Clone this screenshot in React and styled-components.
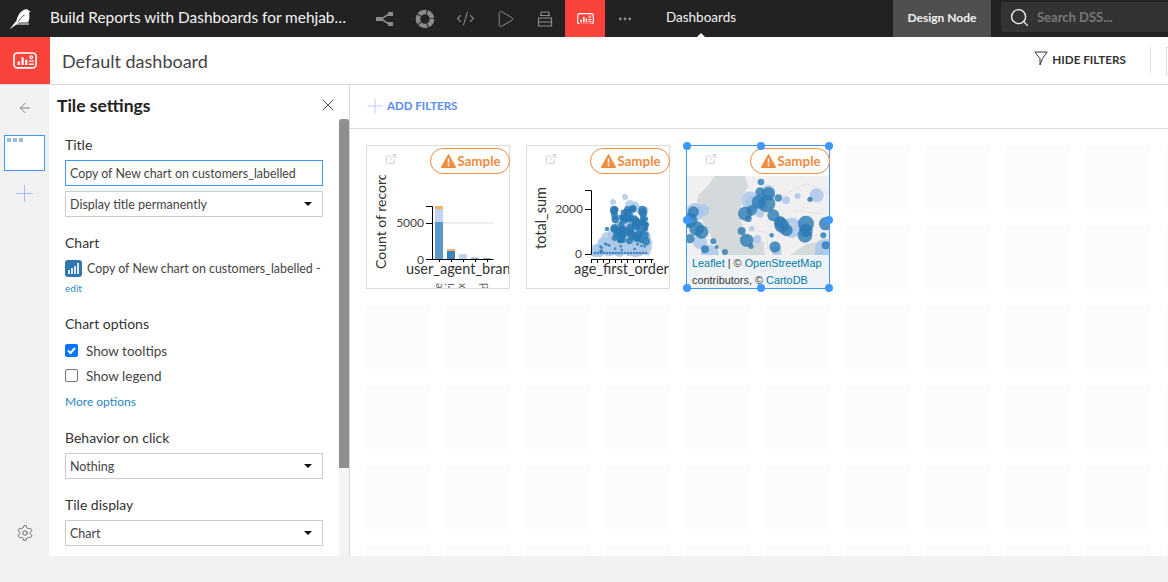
import React from "react";
import styled, { createGlobalStyle } from "styled-components";
import { ArrowLeft, X, Plus, Settings, Search, Play, CodeXml, MoreHorizontal, ExternalLink } from "lucide-react";

const GlobalStyle = createGlobalStyle`
  html, body { margin: 0; padding: 0; height: 100%; background: #f2f2f2; }
  body { font-family: "Lato", "Noto Sans", "Liberation Sans", sans-serif; color: #333; overflow: hidden; }
  * { box-sizing: border-box; }
`;

const Page = styled.div`
  width: 1168px;
  height: 582px;
  display: flex;
  flex-direction: column;
  overflow: hidden;
`;

const TopBar = styled.header`
  height: 37px;
  flex: none;
  background: #222;
  display: flex;
  align-items: stretch;
  color: #fff;
`;

const Brand = styled.div`
  width: 50px;
  padding: 0 10px 0 0;
  display: flex;
  align-items: center;
  justify-content: center;
`;

const ProjectName = styled.div`
  width: 315px;
  font-size: 15.4px;
  line-height: 35px;
  white-space: nowrap;
  color: #f4f4f4;
`;

const NavIcons = styled.nav`
  display: flex;
  align-items: stretch;
`;

const NavIcon = styled.div`
  width: 40px;
  display: flex;
  align-items: center;
  justify-content: center;
  color: #8b8b8b;
  background: ${(p) => (p.$active ? "#f9423a" : "transparent")};
`;

const NavTab = styled.div`
  position: relative;
  width: 112px;
  font-size: 13.5px;
  line-height: 35px;
  text-align: center;
  color: #f2f2f2;
  &::after {
    content: "";
    position: absolute;
    left: 50%;
    bottom: 0;
    margin-left: -4px;
    border: 4px solid transparent;
    border-top: 0;
    border-bottom-color: #fff;
  }
`;

const NodeLabel = styled.div`
  margin-left: auto;
  width: 98px;
  background: #4f4f4f;
  font-size: 12px;
  font-weight: 700;
  line-height: 35px;
  text-align: center;
  color: #f2f2f2;
`;

const SearchBox = styled.div`
  width: 167px;
  margin: 2px 0 5px 10px;
  padding-left: 8px;
  border-radius: 4px 0 0 4px;
  background: #333;
  display: flex;
  align-items: center;
  gap: 7px;
  color: #eee;
  font-size: 13px;
  span { color: #777; font-weight: 700; }
`;

const DashHeader = styled.div`
  height: 48px;
  flex: none;
  background: #fff;
  border-bottom: 1px solid #d9d9d9;
  display: flex;
  align-items: stretch;
`;

const DashBadge = styled.div`
  width: 50px;
  height: 47px;
  background: #f9423a;
  display: flex;
  align-items: center;
  justify-content: center;
`;

const DashTitle = styled.h1`
  margin: 1px 0 0 12px;
  font-size: 18px;
  font-weight: 400;
  line-height: 47px;
  color: #444;
`;

const HeaderActions = styled.div`
  margin-left: auto;
  display: flex;
  align-items: center;
`;

const HideFilters = styled.div`
  display: flex;
  align-items: center;
  gap: 4px;
  font-size: 11.7px;
  font-weight: 700;
  color: #333;
  margin-right: 24px;
  margin-bottom: 4px;
`;

const HeaderDivider = styled.div`
  width: 18px;
  height: 26px;
  margin-bottom: 1px;
  border-left: 1px solid #ddd;
  &::after {
    content: "";
    display: block;
    width: 5px;
    height: 26px;
    margin-left: 15px;
    border: 1px solid #ddd;
    border-right: 0;
  }
`;

const Body = styled.div`
  height: 471px;
  flex: none;
  display: flex;
  background: #fff;
`;

const Rail = styled.aside`
  width: 49px;
  flex: none;
  background: #f2f2f2;
  display: flex;
  flex-direction: column;
  align-items: center;
  padding-top: 15px;
  color: #666;
`;

const SlideThumb = styled.div`
  width: 41px;
  height: 36px;
  margin-top: 19px;
  background: #fff;
  border: 1px solid #3d98ff;
  display: flex;
  gap: 2px;
  padding: 2px;
  &::before, &::after, i {
    content: "";
    display: block;
    width: 4px;
    height: 4px;
    background: #9dbcd8;
  }
`;

const RailPlus = styled.div`
  margin-top: 9px;
  color: #9db4f5;
  display: flex;
`;

const RailBottom = styled.div`
  margin-top: auto;
  margin-bottom: 14px;
  display: flex;
  color: #666;
`;

const Panel = styled.section`
  width: 301px;
  flex: none;
  position: relative;
  border-right: 1px solid #d9d9d9;
  overflow: hidden;
`;

const PanelHead = styled.div`
  height: 44px;
  padding: 0 11px 4px 8px;
  display: flex;
  align-items: center;
  justify-content: space-between;
  font-size: 17.5px;
  font-weight: 700;
  color: #222;
`;

const Scrollbar = styled.div`
  position: absolute;
  top: 34px;
  right: 0;
  bottom: 0;
  width: 10px;
  background: #f4f4f4;
  &::before {
    content: "";
    display: block;
    height: 349px;
    background: #8f8f8f;
    border-radius: 3px 3px 0 0;
  }
`;

const Form = styled.div`
  padding: 7px 0 0 16px;
  width: 274px;
`;

const Label = styled.div`
  font-size: 14px;
  line-height: 18px;
  color: #333;
  margin-top: ${(p) => p.$top || 0}px;
  margin-bottom: 6px;
`;

const TextInput = styled.div`
  height: 26px;
  border: 1px solid #3d98ff;
  font-size: 12.4px;
  line-height: 25px;
  padding-left: 4px;
  color: #444;
  white-space: nowrap;
`;

const SelectBox = styled.div`
  height: 26px;
  margin-top: ${(p) => p.$top || 0}px;
  border: 1px solid #ccc;
  font-size: 12.5px;
  line-height: 25px;
  padding-left: 4px;
  color: #444;
  position: relative;
  &::after {
    content: "";
    position: absolute;
    right: 10px;
    top: 10px;
    border: 4px solid transparent;
    border-bottom: 0;
    border-top-color: #111;
  }
`;

const ChartRow = styled.div`
  display: flex;
  align-items: center;
  gap: 5px;
  margin-top: 8px;
  font-size: 12.4px;
  color: #444;
  white-space: nowrap;
  height: 17px;
`;

const ChartTag = styled.span`
  width: 17px;
  height: 17px;
  border-radius: 3px;
  background: #2f76ae;
  display: flex;
  align-items: center;
  justify-content: center;
  flex: none;
`;

const EditLink = styled.div`
  font-size: 10px;
  color: #2a86c4;
  line-height: 12px;
  margin-top: 5px;
`;

const CheckRow = styled.div`
  display: flex;
  align-items: center;
  gap: 8px;
  height: 13px;
  font-size: 13.5px;
  color: #444;
  margin-top: ${(p) => p.$top || 0}px;
`;

const CheckBox = styled.span`
  width: 13px;
  height: 13px;
  border-radius: 2px;
  flex: none;
  display: flex;
  align-items: center;
  justify-content: center;
  background: ${(p) => (p.$on ? "#0075ff" : "#fff")};
  border: ${(p) => (p.$on ? "none" : "1px solid #767676")};
`;

const MoreLink = styled.div`
  font-size: 12px;
  line-height: 16px;
  color: #2a86c4;
  margin-top: 12px;
`;

const Canvas = styled.main`
  flex: 1;
  min-width: 0;
  display: flex;
  flex-direction: column;
  overflow: hidden;
`;

const FilterBar = styled.div`
  height: 44px;
  flex: none;
  padding: 0 0 2px 13px;
  border-bottom: 1px solid #d9d9d9;
  display: flex;
  align-items: center;
  font-size: 11.5px;
  font-weight: 700;
  color: #5b8def;
  svg { color: #a9bdf5; }
`;

const TileGrid = styled.div`
  flex: 1;
  overflow: hidden;
  padding: 16px 0 0 16px;
  display: grid;
  grid-template-columns: repeat(11, 64px);
  grid-auto-rows: 64px;
  gap: 16px;
`;

const EmptyCell = styled.div`
  background: #fcfcfc;
`;

const Tile = styled.div`
  grid-column: span 2;
  grid-row: span 2;
  position: relative;
  background: #fff;
  border: 1px solid ${(p) => (p.$selected ? "#3d98ff" : "#ddd")};
`;

const OpenIcon = styled.span`
  position: absolute;
  top: 7px;
  left: 18px;
  display: flex;
  color: #c4c4c4;
`;

const SampleBadge = styled.div`
  position: absolute;
  top: 2px;
  right: -1px;
  width: 80px;
  height: 26px;
  padding-left: 2px;
  border: 1px solid #f28c3f;
  border-radius: 13px;
  background: #fff;
  display: flex;
  align-items: center;
  justify-content: center;
  gap: 1px;
  font-size: 13.4px;
  font-weight: 700;
  color: #f28c3f;
  z-index: 2;
`;

const ChartBox = styled.svg`
  display: block;
  width: 142px;
  height: 142px;
  overflow: hidden;
`;

const MapBox = styled.svg`
  position: absolute;
  left: 0;
  top: 30px;
  width: 142px;
  height: 112px;
`;

const Attribution = styled.div`
  position: absolute;
  left: 0;
  right: 0;
  bottom: 0;
  height: 33px;
  padding-left: 5px;
  background: #eff3f6;
  font-family: "Liberation Sans", Arial, sans-serif;
  font-size: 10.9px;
  line-height: 17px;
  color: #333;
  white-space: nowrap;
  a { color: #0078a8; }
`;

const Handle = styled.span`
  position: absolute;
  width: 8px;
  height: 8px;
  margin: -4px 0 0 -4px;
  border-radius: 50%;
  background: #3d98ff;
  left: ${(p) => p.$x}%;
  top: ${(p) => p.$y}%;
  z-index: 3;
`;

const BirdLogo = () => (
  <svg width="22" height="22" viewBox="0 0 22 22">
    <path fill="#fff" d="M0.500 21.500 L7.500 12.500 C8.500 8.500 10.500 4 15 1.800 C17 0.800 19 1.200 20 2.800 L21.800 3.800 L20 4.500 C20.800 8 20.500 12 19 14.500 L10 14.500 Z" />
    <path fill="none" stroke="#222" strokeWidth="0.800" d="M9.500 13.500 C11 10.500 13 8.500 15.500 7" />
    <rect x="6" y="15.500" width="14" height="1" fill="#fff" />
  </svg>
);

const DashIcon = ({ width = 24 }) => (
  <svg width={width} height={width * 0.7} viewBox="0 0 25 17.500" fill="none" stroke="#fff">
    <rect x="1" y="1" width="23" height="15.500" rx="3.500" strokeWidth="1.700" />
    <path d="M6 13.500V10M10 13.500V5.500M13.800 13.500V8" strokeWidth="2.300" />
    <circle cx="19" cy="5.500" r="1.400" strokeWidth="1.200" />
    <path d="M16.500 9.500H21.500M16.500 12.800H21.500" strokeWidth="1.500" />
  </svg>
);

const FlowIcon = () => (
  <svg width="18" height="14" viewBox="0 0 18 14" fill="#8b8b8b">
    <rect x="0" y="5" width="7" height="4" />
    <rect x="12" y="0" width="5" height="4" />
    <rect x="12" y="10" width="5" height="4" />
    <path d="M6 6.500 L13 2 M6 7.500 L13 12" stroke="#8b8b8b" strokeWidth="1.500" />
  </svg>
);

const RingIcon = () => (
  <svg width="20" height="20" viewBox="0 0 20 20" fill="none" stroke="#8b8b8b" strokeWidth="4.500">
    <circle cx="10" cy="10" r="7" strokeDasharray="7.800 1" />
  </svg>
);

const StackIcon = () => (
  <svg width="16" height="16" viewBox="0 0 16 16" fill="none" stroke="#8b8b8b" strokeWidth="1.200">
    <path d="M3.500 4 L4.500 1 H11.500 L12.500 4 M1 7 H15 M1.500 7 V15 H14.500 V7 M1.500 11 H14.500 M3 4.500 H13" />
  </svg>
);

const FunnelIcon = () => (
  <svg width="14" height="15" viewBox="0 0 14 15" fill="none" stroke="#333" strokeWidth="1">
    <path d="M0.800 1 H13.200 L8.500 7.500 L6 14 V7.500 Z" />
  </svg>
);

const WarnIcon = () => (
  <svg width="15" height="14" viewBox="0 0 15 14">
    <path d="M7.500 0.500 L14.800 13.500 H0.200 Z" fill="#f28c3f" stroke="#f28c3f" strokeLinejoin="round" />
    <rect x="6.700" y="4.500" width="1.600" height="5" fill="#fff" />
    <rect x="6.700" y="10.500" width="1.600" height="1.600" fill="#fff" />
  </svg>
);

const BarChartMini = () => (
  <svg width="11" height="11" viewBox="0 0 11 11" fill="#dbe9f4">
    <rect x="0" y="7" width="2" height="4" />
    <rect x="3" y="5" width="2" height="6" />
    <rect x="6" y="3" width="2" height="8" />
    <rect x="9" y="0" width="2" height="11" />
  </svg>
);

const axisText = { fontFamily: "Lato, sans-serif", fontSize: 14.500, fill: "#333" };
const tickText = { ...axisText, fontSize: 12, fill: "#444" };
const cutLabelText = { ...axisText, fontSize: 11, fill: "#666" };

const BarChart = () => (
  <ChartBox viewBox="0 0 142 142">
    <clipPath id="yTitleClip"><rect x="0" y="29" width="30" height="113" /></clipPath>
    <g clipPath="url(#yTitleClip)">
      <text transform="translate(19 123) rotate(-90)" style={{ ...axisText, fontSize: 14 }}>Count of records</text>
    </g>
    <line x1="65" y1="77" x2="127" y2="77" stroke="#ddd" />
    <rect x="68" y="60" width="8" height="3" fill="#f9b06b" />
    <rect x="68" y="63" width="8" height="13" fill="#c1d3ee" />
    <rect x="68" y="76" width="8" height="37" fill="#5b9ac8" />
    <rect x="80" y="103" width="8" height="2" fill="#f9b06b" />
    <rect x="80" y="105" width="8" height="8" fill="#3d85bd" />
    <rect x="92" y="108" width="8" height="5" fill="#c1d3ee" />
    <rect x="104" y="111.500" width="8" height="1.500" fill="#8fb3d6" />
    <rect x="116" y="112" width="8" height="1" fill="#8fb3d6" />
    <path d="M59 60.500 H65.500 V113.500 M59 77.500 H65.500 M59 113.500 H126.500 M72.500 113v3M84.500 113v3M96.500 113v3M108.500 113v3M120.500 113v3" fill="none" stroke="#000" strokeWidth="1" />
    <text x="57" y="81" textAnchor="end" style={tickText}>5000</text>
    <text x="57" y="118" textAnchor="end" style={tickText}>0</text>
    <text x="39" y="128" style={axisText}>user_agent_brand</text>
    <text transform="translate(75 137) rotate(-90)" textAnchor="end" style={cutLabelText}>Chrome</text>
    <text transform="translate(87 137) rotate(-90)" textAnchor="end" style={cutLabelText}>Safari</text>
    <text transform="translate(98 137) rotate(-90)" textAnchor="end" style={cutLabelText}>Firefox</text>
    <text transform="translate(121 137) rotate(-90)" textAnchor="end" style={cutLabelText}>Android</text>
  </ChartBox>
);

// fixed seed so the scatter cloud comes out the same on every render
const makeRandom = (seed) => {
  let s = seed;
  return () => {
    s = (s * 16807) % 2147483647;
    return s / 2147483647;
  };
};

const buildScatter = () => {
  const r = makeRandom(4242);
  const light = [[86, 56, 3], [98, 51, 3], [103, 59, 5], [108, 60, 4.500], [112, 64, 4], [118, 64, 3.500], [80, 92, 6], [77, 98, 6]];
  const dark = [[80, 83, 2.200]];
  for (let i = 0; i < 170; i++) {
    const x = 68 + 53 * r();
    const envelope = 50 * Math.max(0.14, 1 - Math.abs(x - 100) / 34);
    light.push([x, 107 - envelope * Math.sqrt(r()) * r(), 2 + 3.5 * r()]);
  }
  for (let i = 0; i < 75; i++) {
    dark.push([86 + 34 * r(), 62 + 34 * r(), 2.400 + 2 * r()]);
  }
  for (let x = 68; x < 122; x += 3) {
    dark.push([x, 107, 1.300]);
  }
  for (let i = 0; i < 14; i++) {
    dark.push([72 + 48 * r(), 96 + 10 * r(), 1.300]);
  }
  return { light, dark };
};

const scatter = buildScatter();

const ScatterChart = () => (
  <ChartBox viewBox="0 0 142 142">
    <text transform="translate(19 103) rotate(-90)" style={axisText}>total_sum</text>
    {scatter.light.map(([x, y, r], i) => <circle key={i} cx={x} cy={y} r={r} fill="#aec9e8" opacity="0.85" />)}
    {scatter.dark.map(([x, y, r], i) => <circle key={i} cx={x} cy={y} r={r} fill="#2a7ab5" opacity="0.85" />)}
    <path d="M58 44.500 H64.500 V108.500 H58 M58 63.500 H64.500 M64 113.500 H126.500 M64.500 113v4M70.500 113v4M76.500 113v4M82.500 113v4M88.500 113v4M94.500 113v4M100.500 113v4M106.500 113v4M112.500 113v4M118.500 113v4M124.500 113v4" fill="none" stroke="#000" strokeWidth="1" />
    <text x="56" y="67" textAnchor="end" style={tickText}>2000</text>
    <text x="55" y="112" textAnchor="end" style={tickText}>0</text>
    <text x="47" y="128" style={axisText}>age_first_order</text>
  </ChartBox>
);

// bubble coordinates are in 3x map pixels, see the viewBox on MapBox
const mapLight = [
  [410, 165, 21], [353, 167, 9], [318, 180, 12], [210, 180, 27], [265, 155, 21], [240, 220, 12], [240, 190, 22], [335, 262, 30], [310, 265, 18], [215, 265, 8], [232, 296, 12], [90, 340, 27], [60, 305, 21], [70, 210, 18], [45, 215, 27], [435, 325, 30], [290, 335, 15], [415, 340, 12], [220, 190, 24],
];
const mapDark = [
  [243, 125, 10], [240, 155, 14], [265, 160, 20], [295, 173, 11], [260, 190, 26], [235, 185, 20], [195, 220, 21], [215, 210, 16], [205, 235, 10], [280, 225, 18], [300, 245, 18], [320, 270, 18], [305, 255, 22], [378, 250, 24], [378, 270, 20], [375, 285, 22], [437, 250, 20], [430, 285, 9], [200, 300, 20], [213, 318, 8], [185, 272, 12], [285, 320, 17], [275, 285, 7], [40, 215, 17], [30, 240, 22], [50, 265, 22], [65, 275, 20], [30, 295, 14], [100, 303, 9], [110, 320, 6], [135, 335, 9], [390, 177, 8], [20, 250, 12], [437, 315, 12], [75, 327, 12],
];

const LeafletMap = () => (
  <MapBox viewBox="21 107 426 336">
    <rect x="21" y="107" width="426" height="336" fill="#d4dadb" />
    <path fill="#f0f0f0" d="M21 107 H105 L85 135 L55 165 L50 200 L65 240 L95 290 L130 345 H21 Z M195 107 H447 V300 L380 310 L330 345 H255 L250 305 L195 280 L180 230 L185 170 L205 140 Z" />
    <path d="M230 270 L300 290 L360 240 M300 170 L380 130 L447 160 M260 290 L265 345 M340 210 L420 220" fill="none" stroke="#ecd5d5" strokeWidth="2" />
    {mapLight.map(([x, y, r], i) => <circle key={i} cx={x} cy={y} r={r} fill="#a8c6ea" opacity="0.8" />)}
    {mapDark.map(([x, y, r], i) => <circle key={i} cx={x} cy={y} r={r} fill="#2a7ab5" opacity="0.8" />)}
  </MapBox>
);

const handles = [[0, 0], [52, 0], [100, 0], [0, 52], [100, 52], [0, 100], [52, 100], [100, 100]];

const TileChrome = () => (
  <>
    <OpenIcon><ExternalLink size={12} strokeWidth={1.500} /></OpenIcon>
    <SampleBadge>
      <WarnIcon />
      Sample
    </SampleBadge>
  </>
);

export default function App() {
  // the tiles fill 2x2 cells, so only the remaining cells are drawn as empty
  const emptyCells = Array.from({ length: 54 }, (_, i) => i);

  return (
    <Page>
      <GlobalStyle />
      <TopBar>
        <Brand><BirdLogo /></Brand>
        <ProjectName>Build Reports with Dashboards for mehjab…</ProjectName>
        <NavIcons>
          <NavIcon><FlowIcon /></NavIcon>
          <NavIcon><RingIcon /></NavIcon>
          <NavIcon><CodeXml size={19} strokeWidth={1.400} /></NavIcon>
          <NavIcon><Play size={20} strokeWidth={1.200} /></NavIcon>
          <NavIcon><StackIcon /></NavIcon>
          <NavIcon $active><DashIcon width={17} /></NavIcon>
          <NavIcon><MoreHorizontal size={16} strokeWidth={2.200} /></NavIcon>
        </NavIcons>
        <NavTab>Dashboards</NavTab>
        <NodeLabel>Design Node</NodeLabel>
        <SearchBox>
          <Search size={21} strokeWidth={1.600} />
          <span>Search DSS...</span>
        </SearchBox>
      </TopBar>

      <DashHeader>
        <DashBadge><DashIcon width={24} /></DashBadge>
        <DashTitle>Default dashboard</DashTitle>
        <HeaderActions>
          <HideFilters>
            <FunnelIcon />
            HIDE FILTERS
          </HideFilters>
          <HeaderDivider />
        </HeaderActions>
      </DashHeader>

      <Body>
        <Rail>
          <ArrowLeft size={16} strokeWidth={1.200} />
          <SlideThumb><i /></SlideThumb>
          <RailPlus><Plus size={27} strokeWidth={0.800} /></RailPlus>
          <RailBottom><Settings size={18} strokeWidth={1.300} /></RailBottom>
        </Rail>

        <Panel>
          <PanelHead>
            Tile settings
            <X size={20} strokeWidth={1} />
          </PanelHead>
          <Scrollbar />
          <Form>
            <Label>Title</Label>
            <TextInput>Copy of New chart on customers_labelled</TextInput>
            <SelectBox $top={5}>Display title permanently</SelectBox>
            <Label $top={17}>Chart</Label>
            <ChartRow>
              <ChartTag><BarChartMini /></ChartTag>
              Copy of New chart on customers_labelled -
            </ChartRow>
            <EditLink>edit</EditLink>
            <Label $top={21}>Chart options</Label>
            <CheckRow $top={11}>
              <CheckBox $on>
                <svg width="11" height="11" viewBox="0 0 11 11" fill="none" stroke="#fff" strokeWidth="2"><path d="M2 5.500 L4.500 8 L9 3" /></svg>
              </CheckBox>
              Show tooltips
            </CheckRow>
            <CheckRow $top={12}>
              <CheckBox />
              Show legend
            </CheckRow>
            <MoreLink>More options</MoreLink>
            <Label $top={19}>Behavior on click</Label>
            <SelectBox>Nothing</SelectBox>
            <Label $top={17}>Tile display</Label>
            <SelectBox>Chart</SelectBox>
          </Form>
        </Panel>

        <Canvas>
          <FilterBar>
            <Plus size={24} strokeWidth={0.800} />
            ADD FILTERS
          </FilterBar>
          <TileGrid>
            <Tile>
              <TileChrome />
              <BarChart />
            </Tile>
            <Tile>
              <TileChrome />
              <ScatterChart />
            </Tile>
            <Tile $selected>
              <TileChrome />
              <LeafletMap />
              <Attribution>
                <a>Leaflet</a> | © <a>OpenStreetMap</a><br />
                contributors, © <a>CartoDB</a>
              </Attribution>
              {handles.map(([x, y]) => <Handle key={`${x}-${y}`} $x={x} $y={y} />)}
            </Tile>
            {emptyCells.map((i) => <EmptyCell key={i} />)}
          </TileGrid>
        </Canvas>
      </Body>
    </Page>
  );
}
